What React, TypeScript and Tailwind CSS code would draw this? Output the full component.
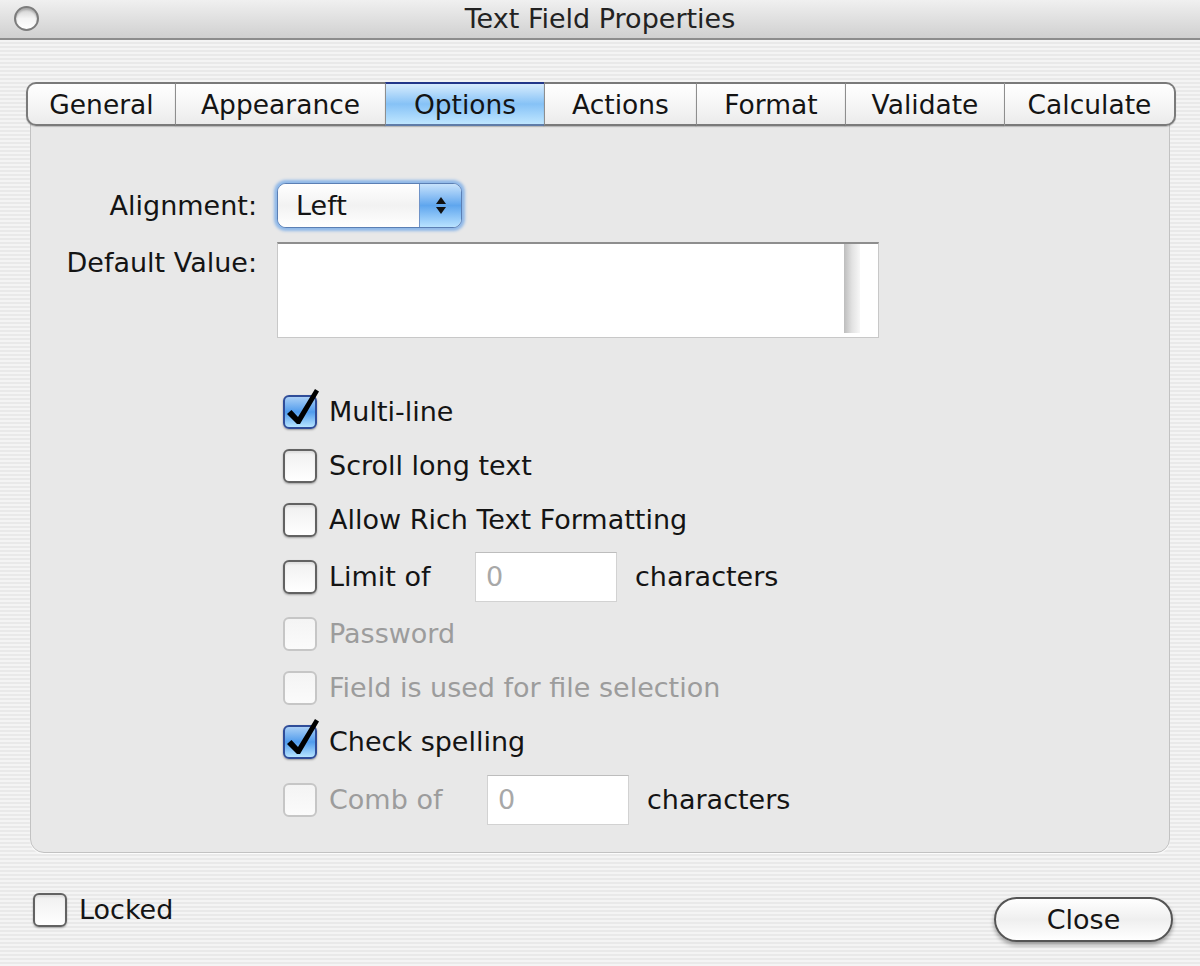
import React from "react"

type Row = {
  label: string
  h: string
  checked?: boolean
  disabled?: boolean
  field?: { labelW: string }
}

const rows: Row[] = [
  { label: "Multi-line", h: "h-[54px]", checked: true },
  { label: "Scroll long text", h: "h-[54px]" },
  { label: "Allow Rich Text Formatting", h: "h-[54px]" },
  { label: "Limit of", h: "h-[60px]", field: { labelW: "w-[146px]" } },
  { label: "Password", h: "h-[54px]", disabled: true },
  { label: "Field is used for file selection", h: "h-[54px]", disabled: true },
  { label: "Check spelling", h: "h-[54px]", checked: true },
  { label: "Comb of", h: "h-[62px]", disabled: true, field: { labelW: "w-[158px]" } },
]

const tabs = [
  { name: "General", w: "w-[149px]" },
  { name: "Appearance", w: "w-[210px]" },
  { name: "Options", w: "w-[159px]", active: true },
  { name: "Actions", w: "w-[152px]" },
  { name: "Format", w: "w-[149px]" },
  { name: "Validate", w: "w-[159px]" },
  { name: "Calculate", w: "w-[172px]" },
]

function Checkbox({ checked = false, disabled = false }: { checked?: boolean; disabled?: boolean }) {
  if (checked) {
    return (
      <span className="relative block h-[34px] w-[34px] shrink-0 rounded-[6px] border-2 border-[#2f4c98] bg-gradient-to-b from-[#a9cff5] via-[#4f9bec] to-[#b6e4ff] shadow-[0_1px_2px_rgba(0,0,0,0.35)]">
        <svg className="absolute left-[-2px] top-[-2px] overflow-visible" width="38" height="38" viewBox="0 0 38 38">
          <path d="M4 19 L8.5 15 L15 22 L32 -6 L36 -3.5 L17 29 L14 29 Z" fill="#000" />
        </svg>
      </span>
    )
  }
  if (disabled) {
    return (
      <span className="block h-[34px] w-[34px] shrink-0 rounded-[6px] border-2 border-[#c6c6c6] bg-gradient-to-b from-[#f4f4f4] to-[#fbfbfb]" />
    )
  }
  return (
    <span className="block h-[34px] w-[34px] shrink-0 rounded-[6px] border-2 border-[#626262] bg-gradient-to-b from-[#f0f0f0] to-white shadow-[inset_0_2px_2px_rgba(0,0,0,0.08),0_1px_2px_rgba(0,0,0,0.3)]" />
  )
}

function SmallField() {
  return (
    <div className="flex h-[50px] w-[142px] items-center border border-[#d2d2d2] border-t-[#bdbdbd] bg-white pl-[10px] text-[#a8a8a8]">
      0
    </div>
  )
}

export default function App() {
  return (
    <div className="h-[966px] w-[1200px] overflow-hidden font-['DejaVu_Sans',sans-serif] text-[27px] leading-[30px] text-[#141414]">
      <div className="relative flex h-[40px] items-center justify-center border-b-2 border-[#8d8d8d] bg-gradient-to-b from-[#f0f0f0] to-[#d0d0d0]">
        <span className="absolute left-[14px] top-[6px] h-[25px] w-[25px] rounded-full border-2 border-[#7c7c7c] bg-gradient-to-b from-[#cfcfcf] via-[#f4f4f4] to-[#ffffff] shadow-[inset_0_2px_2px_rgba(0,0,0,0.2)]" />
        <span className="text-[#222]">Text Field Properties</span>
      </div>

      <div className="h-[926px] bg-[repeating-linear-gradient(180deg,#f4f4f4_0px,#f4f4f4_2px,#e9e9e9_2px,#e9e9e9_4px)] pt-[42px]">
        <div className="relative z-10 ml-[26px] flex h-[44px] w-[1150px] text-[26.5px]">
          {tabs.map((t, i) => (
            <div
              key={t.name}
              className={
                (t.active
                  ? "border-y-2 border-t-[#23378a] border-b-[#5f7ca8] bg-gradient-to-b from-[#d7ecfd] via-[#86c2f6] to-[#bfe6ff] "
                  : "border-y-2 border-[#7a7a7a] bg-gradient-to-b from-white via-[#f6f6f6] to-[#ebebeb] ") +
                (i === 0 ? "rounded-l-[10px] border-l-2 border-l-[#7a7a7a] " : "border-l border-l-[#8e8e8e] ") +
                (i === tabs.length - 1 ? "rounded-r-[10px] border-r-2 border-r-[#7a7a7a] " : "") +
                t.w +
                " flex items-center justify-center pt-[2px] shadow-[0_1px_1px_rgba(0,0,0,0.2)]"
              }
            >
              {t.name}
            </div>
          ))}
        </div>

        <div className="ml-[30px] mt-[-22px] h-[749px] w-[1140px] rounded-b-[14px] rounded-t-[4px] border border-[#c2c2c2] bg-[#e8e8e8] pt-[22px] shadow-[0_1px_1px_rgba(255,255,255,0.8)]">
          <div className="grid grid-cols-[226px_auto] gap-x-[20px] pt-[56px]">
            <div className="self-center text-right">Alignment:</div>
            <div className="flex h-[45px] w-[185px] rounded-[9px] border border-[#5b7fb4] bg-white shadow-[0_0_3px_3px_#8fb8e8]">
              <div className="flex flex-1 items-center rounded-l-[8px] bg-gradient-to-b from-white via-[#f2f2f2] to-white pl-[18px]">Left</div>
              <div className="flex w-[42px] flex-col items-center justify-center gap-[3px] rounded-r-[8px] border-l border-[#6f93c8] bg-gradient-to-b from-[#c7e2fb] via-[#5fa6ee] to-[#b8e2ff]">
                <svg width="10" height="7" viewBox="0 0 10 7"><path d="M5 0 L10 7 L0 7 Z" fill="#111" /></svg>
                <svg width="10" height="7" viewBox="0 0 10 7"><path d="M0 0 L10 0 L5 7 Z" fill="#111" /></svg>
              </div>
            </div>

            <div className="mt-[14px] pt-[6px] text-right">Default Value:</div>
            <div className="mt-[14px] flex h-[96px] w-[602px] border border-[#c8c8c8] border-t-2 border-t-[#8e8e8e] bg-white">
              <div className="flex-1" />
              <div className="mb-[4px] w-[16px] bg-gradient-to-r from-[#bdbdbd] via-[#e2e2e2] to-[#f7f7f7]" />
              <div className="w-[18px]" />
            </div>
          </div>

          <div className="mt-[47px] flex flex-col pl-[252px]">
            {rows.map((r) => (
              <div key={r.label} className={r.h + " flex items-center gap-[12px]"}>
                <Checkbox checked={r.checked} disabled={r.disabled} />
                {r.field ? (
                  <div className="flex items-center">
                    <span className={r.field.labelW + (r.disabled ? " text-[#9c9c9c]" : "")}>{r.label}</span>
                    <SmallField />
                    <span className="ml-[18px]">characters</span>
                  </div>
                ) : (
                  <span className={r.disabled ? "text-[#9c9c9c]" : ""}>{r.label}</span>
                )}
              </div>
            ))}
          </div>
        </div>

        <div className="mt-[36px] flex items-start justify-between pl-[33px] pr-[27px]">
          <div className="mt-[4px] flex items-center gap-[12px]">
            <Checkbox />
            <span>Locked</span>
          </div>
          <button className="mt-[8px] flex h-[45px] w-[179px] items-center justify-center rounded-full border-2 border-[#555] bg-gradient-to-b from-white via-[#efefef] to-white shadow-[0_3px_4px_rgba(0,0,0,0.35)]">
            Close
          </button>
        </div>
      </div>
    </div>
  )
}
